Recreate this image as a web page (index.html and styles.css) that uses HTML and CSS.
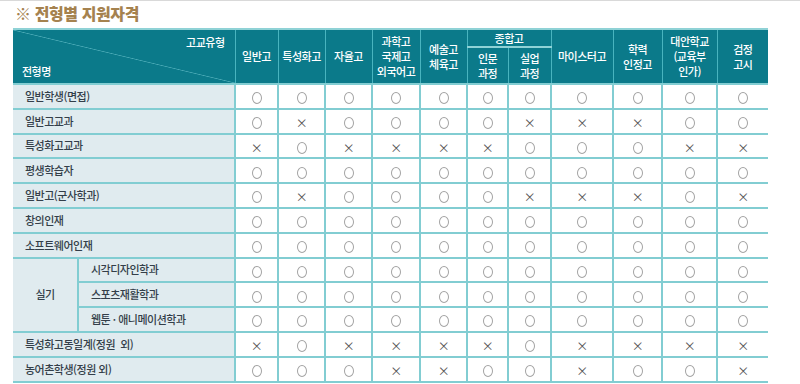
FILE: index.html
```html
<!DOCTYPE html>
<html lang="ko">
<head>
    <meta charset="UTF-8">
    <meta name="viewport" content="width=device-width, initial-scale=1.0">
    <title>전형별 지원자격</title>
    <link rel="stylesheet" href="styles.css">
</head>
<body>
    <div class="page">
        <h2 class="title">※ 전형별 지원자격</h2>

        <table class="qual">
            <colgroup>
                <col style="width:65px">
                <col style="width:157px">
                <col style="width:43px">
                <col style="width:47px">
                <col style="width:47px">
                <col style="width:48px">
                <col style="width:47px">
                <col style="width:41px">
                <col style="width:43px">
                <col style="width:62px">
                <col style="width:49px">
                <col style="width:55px">
                <col style="width:51px">
            </colgroup>
            <thead>
                <tr class="head1">
                    <th class="corner" colspan="2" rowspan="2">
                        <div class="corner-in">
                            <span class="corner-top">고교유형</span>
                            <span class="corner-bottom">전형명</span>
                        </div>
                    </th>
                    <th rowspan="2">일반고</th>
                    <th rowspan="2">특성화고</th>
                    <th rowspan="2">자율고</th>
                    <th rowspan="2">과학고<br>국제고<br>외국어고</th>
                    <th rowspan="2">예술고<br>체육고</th>
                    <th colspan="2" class="group">종합고</th>
                    <th rowspan="2">마이스터고</th>
                    <th rowspan="2">학력<br>인정고</th>
                    <th rowspan="2">대안학교<br>(교육부<br>인가)</th>
                    <th rowspan="2">검정<br>고시</th>
                </tr>
                <tr class="head2">
                    <th>인문<br>과정</th>
                    <th>실업<br>과정</th>
                </tr>
            </thead>
            <tbody>
                <tr>
                    <td class="label" colspan="2">일반학생(면접)</td>
                    <td><span class="o"></span></td><td><span class="o"></span></td><td><span class="o"></span></td><td><span class="o"></span></td><td><span class="o"></span></td><td><span class="o"></span></td><td><span class="o"></span></td><td><span class="o"></span></td><td><span class="o"></span></td><td><span class="o"></span></td><td><span class="o"></span></td>
                </tr>
                <tr>
                    <td class="label" colspan="2">일반고교과</td>
                    <td><span class="o"></span></td><td><span class="x">×</span></td><td><span class="o"></span></td><td><span class="o"></span></td><td><span class="o"></span></td><td><span class="o"></span></td><td><span class="x">×</span></td><td><span class="x">×</span></td><td><span class="x">×</span></td><td><span class="o"></span></td><td><span class="o"></span></td>
                </tr>
                <tr>
                    <td class="label" colspan="2">특성화고교과</td>
                    <td><span class="x">×</span></td><td><span class="o"></span></td><td><span class="x">×</span></td><td><span class="x">×</span></td><td><span class="x">×</span></td><td><span class="x">×</span></td><td><span class="o"></span></td><td><span class="o"></span></td><td><span class="o"></span></td><td><span class="x">×</span></td><td><span class="x">×</span></td>
                </tr>
                <tr>
                    <td class="label" colspan="2">평생학습자</td>
                    <td><span class="o"></span></td><td><span class="o"></span></td><td><span class="o"></span></td><td><span class="o"></span></td><td><span class="o"></span></td><td><span class="o"></span></td><td><span class="o"></span></td><td><span class="o"></span></td><td><span class="o"></span></td><td><span class="o"></span></td><td><span class="o"></span></td>
                </tr>
                <tr>
                    <td class="label" colspan="2">일반고(군사학과)</td>
                    <td><span class="o"></span></td><td><span class="x">×</span></td><td><span class="o"></span></td><td><span class="o"></span></td><td><span class="o"></span></td><td><span class="o"></span></td><td><span class="x">×</span></td><td><span class="x">×</span></td><td><span class="x">×</span></td><td><span class="o"></span></td><td><span class="x">×</span></td>
                </tr>
                <tr>
                    <td class="label" colspan="2">창의인재</td>
                    <td><span class="o"></span></td><td><span class="o"></span></td><td><span class="o"></span></td><td><span class="o"></span></td><td><span class="o"></span></td><td><span class="o"></span></td><td><span class="o"></span></td><td><span class="o"></span></td><td><span class="o"></span></td><td><span class="o"></span></td><td><span class="o"></span></td>
                </tr>
                <tr>
                    <td class="label" colspan="2">소프트웨어인재</td>
                    <td><span class="o"></span></td><td><span class="o"></span></td><td><span class="o"></span></td><td><span class="o"></span></td><td><span class="o"></span></td><td><span class="o"></span></td><td><span class="o"></span></td><td><span class="o"></span></td><td><span class="o"></span></td><td><span class="o"></span></td><td><span class="o"></span></td>
                </tr>
                <tr>
                    <td class="label group-label" rowspan="3">실기</td>
                    <td class="label sub">시각디자인학과</td>
                    <td><span class="o"></span></td><td><span class="o"></span></td><td><span class="o"></span></td><td><span class="o"></span></td><td><span class="o"></span></td><td><span class="o"></span></td><td><span class="o"></span></td><td><span class="o"></span></td><td><span class="o"></span></td><td><span class="o"></span></td><td><span class="o"></span></td>
                </tr>
                <tr>
                    <td class="label sub">스포츠재활학과</td>
                    <td><span class="o"></span></td><td><span class="o"></span></td><td><span class="o"></span></td><td><span class="o"></span></td><td><span class="o"></span></td><td><span class="o"></span></td><td><span class="o"></span></td><td><span class="o"></span></td><td><span class="o"></span></td><td><span class="o"></span></td><td><span class="o"></span></td>
                </tr>
                <tr>
                    <td class="label sub">웹툰 · 애니메이션학과</td>
                    <td><span class="o"></span></td><td><span class="o"></span></td><td><span class="o"></span></td><td><span class="o"></span></td><td><span class="o"></span></td><td><span class="o"></span></td><td><span class="o"></span></td><td><span class="o"></span></td><td><span class="o"></span></td><td><span class="o"></span></td><td><span class="o"></span></td>
                </tr>
                <tr>
                    <td class="label" colspan="2">특성화고동일계(정원&nbsp; 외)</td>
                    <td><span class="x">×</span></td><td><span class="o"></span></td><td><span class="x">×</span></td><td><span class="x">×</span></td><td><span class="x">×</span></td><td><span class="x">×</span></td><td><span class="o"></span></td><td><span class="x">×</span></td><td><span class="x">×</span></td><td><span class="x">×</span></td><td><span class="x">×</span></td>
                </tr>
                <tr>
                    <td class="label" colspan="2">농어촌학생(정원 외)</td>
                    <td><span class="o"></span></td><td><span class="o"></span></td><td><span class="o"></span></td><td><span class="x">×</span></td><td><span class="x">×</span></td><td><span class="o"></span></td><td><span class="o"></span></td><td><span class="x">×</span></td><td><span class="o"></span></td><td><span class="o"></span></td><td><span class="x">×</span></td>
                </tr>
            </tbody>
        </table>
    </div>
</body>
</html>
```

FILE: styles.css
```css
* {
    padding: 0;
    margin: 0;
    box-sizing: border-box;
}

body {
    background: #fff;
    border-top: 1px solid #d9d9d9;
    font-family: "Noto Sans CJK KR", "Noto Sans", sans-serif;
}

.page {
    padding-left: 13px;
}

.title {
    height: 27px;
    padding: 0 0 0 2px;
    font-size: 16px;
    line-height: 24px;
    font-weight: 900;
    letter-spacing: -0.4px;
    color: #a5824f;
}

.qual {
    width: 755px;
    table-layout: fixed;
    border-collapse: collapse;
    font-size: 11px;
    letter-spacing: -0.5px;
}

/* header */
.qual thead th {
    background-color: #0b7a8a;
    color: #fff;
    font-weight: 500;
    line-height: 15px;
    text-align: center;
    vertical-align: middle;
    border-left: 1px solid #49b4bf;
    border-top: 2px solid #8fd2d6;
}
.head1 {
    height: 18px;
}
.head2 {
    height: 37px;
}
.head2 th {
    line-height: 16px;
}
.qual thead .group {
    border-bottom: 1px solid #49b4bf;
}
.qual thead .corner {
    border-left: none;
    background-image: linear-gradient(to top right, transparent calc(50% - 0.7px), #4aaab6 50%, transparent calc(50% + 0.7px));
}
.corner-in {
    display: flex;
    flex-direction: column;
    height: 53px;
    padding: 5px 10px 4px 9px;
}
.corner-top {
    align-self: flex-end;
}
.corner-bottom {
    margin-top: auto;
    align-self: flex-start;
}

/* body */
.qual tbody tr {
    height: 24.8px;
}
.qual tbody td {
    text-align: center;
    vertical-align: middle;
    border: 2px solid #82cdd2;
    background: #fff;
    line-height: 15px;
}
.qual tbody td:last-child {
    border-right: none;
}
.qual tbody td.label {
    border-left: none;
    background: #e0ebef;
    text-align: left;
    padding-left: 12px;
    color: #333e49;
    font-weight: 500;
}
.qual tbody td.sub {
    padding-left: 12px;
}
.qual tbody td.group-label {
    text-align: center;
    padding-left: 0;
}

.o {
    display: inline-block;
    width: 10px;
    height: 12px;
    margin-top: 1px;
    border: 1.4px solid #a3a3a3;
    border-radius: 50%;
    vertical-align: middle;
}
.x {
    display: inline-block;
    font-size: 12px;
    line-height: 12px;
    color: #555;
    vertical-align: middle;
}
```
